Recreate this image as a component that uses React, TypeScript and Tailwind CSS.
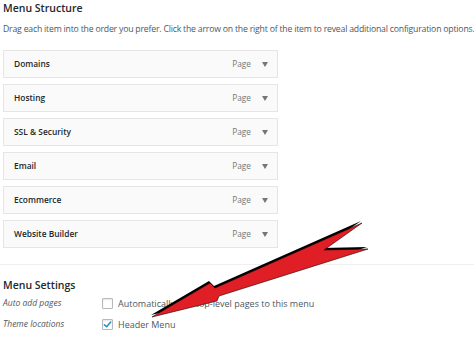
import React from "react";

const items = ["Domains", "Hosting", "SSL & Security", "Email", "Ecommerce", "Website Builder"];

function Check({ checked }: { checked?: boolean }) {
  return (
    <span className="flex h-[11px] w-[11px] shrink-0 items-center justify-center rounded-[1px] border border-[#b4b9be] bg-white shadow-[inset_0_1px_2px_rgba(0,0,0,0.1)]">
      {checked && (
        <svg width="9" height="9" viewBox="0 0 10 10">
          <path d="M1.5 5.2 L4 7.6 L8.6 2.2" fill="none" stroke="#1e8cbe" strokeWidth="1.6" strokeLinecap="round" strokeLinejoin="round" />
        </svg>
      )}
    </span>
  );
}

export default function App() {
  return (
    <div
      className="relative h-[337px] w-[474px] overflow-hidden bg-white text-[#23282d]"
      style={{ fontFamily: '"Open Sans", "Noto Sans", sans-serif' }}
    >
      <div className="px-[3px]">
        <h2 className="text-[10.5px] font-semibold leading-[16px]">Menu Structure</h2>
        <p className="mt-[5px] whitespace-nowrap text-[8.7px] leading-[16px] tracking-[-0.2px] text-[#50575e]">
          Drag each item into the order you prefer. Click the arrow on the right of the item to reveal additional configuration options.
        </p>
        <ul className="mt-[13px] flex w-[275px] flex-col gap-[6px]">
          {items.map((t) => (
            <li
              key={t}
              className="flex h-[28px] items-center justify-between border border-[#e5e5e5] bg-[#fafafa] pl-[10px] pr-[9px]"
            >
              <span className="text-[8.4px] font-semibold text-[#23282d]">{t}</span>
              <span className="flex items-center gap-[11px]">
                <span className="text-[8.3px] text-[#72777c]">Page</span>
                <svg width="6" height="5" viewBox="0 0 6 5">
                  <path d="M0 0 L6 0 L3 5 Z" fill="#72777c" />
                </svg>
              </span>
            </li>
          ))}
        </ul>
      </div>
      <div className="mt-[16px] h-px w-full bg-[#f0f0f0]" />
      <div className="px-[3px]">
        <h3 className="mt-[12px] text-[10.5px] font-semibold leading-[16px]">Menu Settings</h3>
        <div className="grid grid-cols-[99px_1fr]">
          <div className="flex h-[21px] items-center text-[8.5px] italic text-[#50575e]">Auto add pages</div>
          <div className="flex h-[21px] items-center gap-[5px] text-[9px] text-[#50575e]">
            <Check />
            <span>Automatically add top-level pages to this menu</span>
          </div>
          <div className="flex h-[21px] items-center text-[8.5px] italic text-[#50575e]">Theme locations</div>
          <div className="flex h-[21px] items-center gap-[5px] text-[9px] text-[#50575e]">
            <Check checked />
            <span>Header Menu</span>
          </div>
        </div>
      </div>
      <svg className="pointer-events-none absolute left-0 top-0" width="474" height="337" viewBox="0 0 474 337">
        <polygon
          points="151,315 209,281 214,286 361,221 322,248 367,247 218,295 216,300"
          fill="#000"
        />
        <polygon
          points="152,317 210,283 215,288 362,223 324,250 368,249 219,296 217,301"
          fill="#e01e26"
          stroke="#1a0000"
          strokeWidth="0.6"
        />
      </svg>
    </div>
  );
}
